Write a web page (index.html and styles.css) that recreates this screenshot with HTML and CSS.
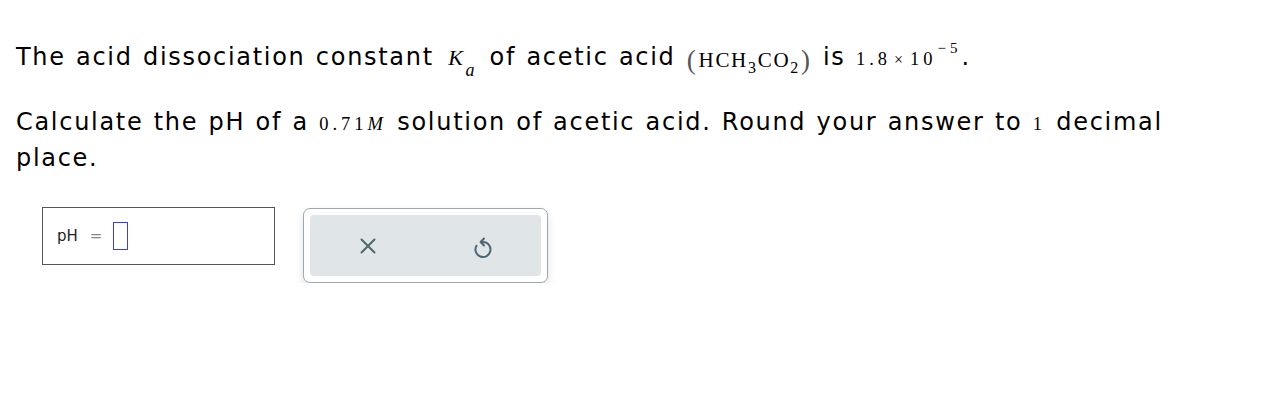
FILE: index.html
```html
<!DOCTYPE html>
<html>
<head>
<meta charset="utf-8">
<link rel="stylesheet" href="styles.css">
</head>
<body>
<div class="page">
  <p class="q q1">The acid dissociation constant <span class="m ka"><i>K</i><sub class="sub-i"><i>a</i></sub></span> of acetic acid <span class="m chem"><span class="paren">(</span>HCH<sub>3</sub>CO<sub>2</sub><span class="paren">)</span></span> is <span class="m sm">1.8<span class="times">×</span>10<sup>−5</sup></span>.</p>
  <p class="q q2">Calculate the pH of a <span class="m sm">0.71<i>M</i></span> solution of acetic acid. Round your answer to <span class="m sm">1</span> decimal place.</p>
  <div class="answer-row">
    <div class="answer-box">
      <span class="lbl">pH</span><span class="eq">=</span><span class="slot"></span>
    </div>
    <div class="tools">
      <div class="tools-inner">
        <button class="tbtn" aria-label="clear">
          <svg width="18" height="18" viewBox="0 0 18 18"><path d="M2.5 2.5 L15.5 15.5 M15.5 2.5 L2.5 15.5" stroke="#4d6673" stroke-width="2" stroke-linecap="round" fill="none"/></svg>
        </button>
        <button class="tbtn" aria-label="reset">
          <svg width="20" height="26" viewBox="0 0 20 26"><path d="M8 9 L10 9 A7.5 7.5 0 1 1 3.5 12.7" stroke="#4d6673" stroke-width="2" stroke-linecap="round" fill="none"/><path d="M11 5.5 L7.6 9 L11 12.5" stroke="#4d6673" stroke-width="2" stroke-linecap="round" stroke-linejoin="round" fill="none"/></svg>
        </button>
      </div>
    </div>
  </div>
</div>
</body>
</html>
```
FILE: styles.css
```css
* { box-sizing: border-box; }
html, body { margin: 0; padding: 0; background: #fff; }
body { font-family: "DejaVu Sans", Verdana, sans-serif; color: #000; }
.page { padding: 39px 16px 0 16px; }
.q { margin: 0; font-size: 24px; line-height: 36px; letter-spacing: 1.7px; word-spacing: 1px; }
.q1 { margin-bottom: 29px; }
.q2 { max-width: 1200px; }
.m { font-family: "Liberation Serif", "Times New Roman", serif; font-size: 21px; line-height: 0; word-spacing: 0; }
.m.sm { font-size: 18.5px; letter-spacing: 4px; }
.ka { margin: 0 3px 0 4px; font-size: 22px; }
.ka sub.sub-i { font-size: 18px; vertical-align: -11px; line-height: 0; margin-left: 1px; }
.chem { vertical-align: -2px; }
.chem sub { font-size: 16px; vertical-align: -6px; line-height: 0; }
.m sup { font-size: 15px; vertical-align: 12px; line-height: 0; margin-left: 1px; }
.times { margin: 0 3px; font-size: 16px; }
.paren { font-size: 27px; color: #555; vertical-align: -2px; margin: 0 1px; line-height: 0; }
.answer-row { display: flex; align-items: flex-start; margin-top: 31px; padding-left: 26px; gap: 28px; }
.answer-box { width: 233px; height: 58px; border: 1.5px solid #555; display: flex; align-items: center; padding-left: 14px; font-size: 15px; }
.lbl { color: #222; }
.eq { color: #888; margin: 0 11px 0 12px; }
.slot { width: 15px; height: 28px; border: 1.5px solid #3b3bff; display: inline-block; }
.tools { margin-top: 1px; width: 245px; height: 75px; border: 1.5px solid #9aa9b2; border-radius: 7px; background: #fff; padding: 6px; box-shadow: 0 4px 8px rgba(0,0,0,0.12); }
.tools-inner { width: 100%; height: 100%; background: #e0e5e8; border-radius: 4px; display: flex; align-items: center; }
.tbtn { border: 0; background: transparent; padding: 0; flex: 1; height: 40px; display: flex; align-items: center; justify-content: center; }
```
